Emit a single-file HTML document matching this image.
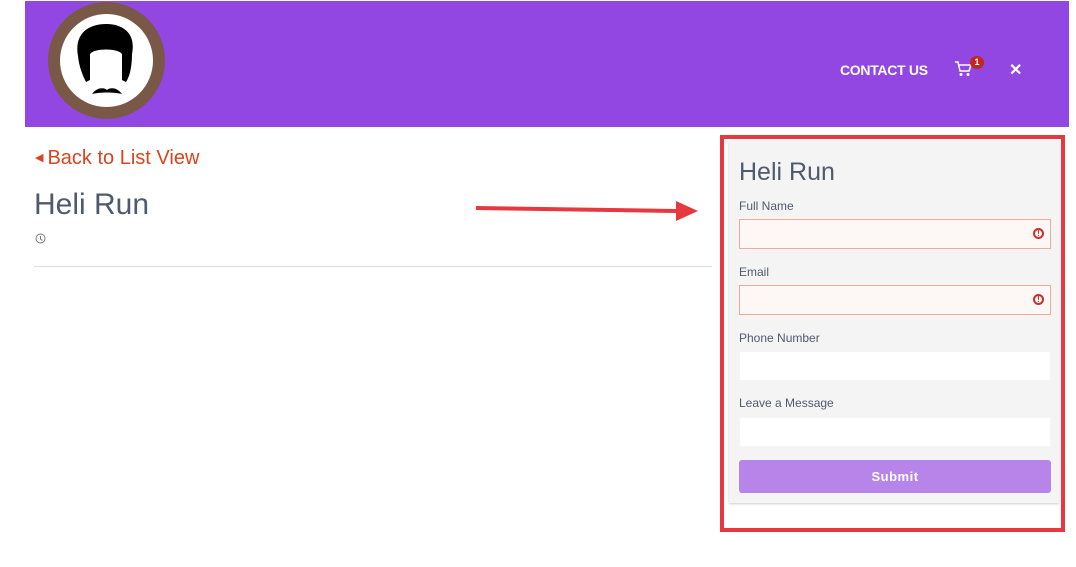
<!DOCTYPE html>
<html><head><meta charset="utf-8"><style>
*{box-sizing:border-box;margin:0;padding:0}
body{width:1076px;height:567px;background:#fff;font-family:"Liberation Sans",sans-serif;position:relative;overflow:hidden}
.hdr{position:absolute;left:25px;top:1px;width:1044px;height:126px;background:#9347e2}
.logo{position:absolute;left:48px;top:2px;width:117px;height:117px;border-radius:50%;background:#7a5847}
.logo .in{position:absolute;left:12px;top:12px;width:93px;height:93px;border-radius:50%;background:#fff}
.nav{position:absolute;top:62px;color:#fff;font-weight:bold;font-size:14px;letter-spacing:-0.3px}
.back{position:absolute;left:35px;top:147px;color:#d9441f;font-size:20px}
.title{position:absolute;left:34px;top:188px;color:#4f5a6e;font-size:30px}
.line{position:absolute;left:34px;top:266px;width:678px;height:1px;background:#dcdce2}
.redbox{position:absolute;left:720px;top:135px;width:345px;height:397px;border:4px solid #e8383f}
.panel{position:absolute;left:729px;top:140px;width:330px;height:363px;background:#f4f4f4;box-shadow:0 1px 2px #ccc}
.lbl{position:absolute;left:739px;color:#4f5a6e;font-size:12px}
.inp{position:absolute;left:739px;width:312px;height:30px;background:#fff;border:1px solid #f5f5f5}
.err{background:#fdf7f6;border:1px solid #f3a898}
.ic{position:absolute;right:6px;top:8px;width:11px;height:11px;border:2px solid #c9302c;border-radius:50%;color:#c9302c;font-size:8px;font-weight:bold;text-align:center;line-height:7px}
.btn{position:absolute;left:739px;top:460px;width:312px;height:33px;background:#b784ea;border-radius:3px;color:#fff;font-weight:bold;font-size:13px;text-align:center;line-height:33px;letter-spacing:.5px}
</style></head><body>
<div class="hdr"></div>
<div class="logo"><div class="in">
<svg width="93" height="93" viewBox="0 0 93 93"><path d="M18 42 C14 20 28 10 46 10 C64 10 76 20 72 40 C72 52 70 62 66 68 L62 66 L62 40 C58 34 34 34 30 40 L30 66 L26 68 C22 60 19 52 18 42 Z" fill="#000"/><path d="M32 80 C38 72 45 74 47 76 C49 74 56 72 62 80 C54 78 40 78 32 80Z" fill="#000"/></svg>
</div></div>
<div class="nav" style="left:840px">CONTACT US</div>
<svg style="position:absolute;left:954px;top:61px" width="18" height="16" viewBox="0 0 18 16"><path d="M1 1h3l2 9h9l2-6H5" fill="none" stroke="#fff" stroke-width="1.5"/><circle cx="7" cy="13.5" r="1.5" fill="#fff"/><circle cx="14" cy="13.5" r="1.5" fill="#fff"/></svg>
<div style="position:absolute;left:970px;top:56px;width:14px;height:13px;border-radius:50%;background:#c0281e;color:#fff;font-size:9px;font-weight:bold;text-align:center;line-height:13px">1</div>
<div class="nav" style="left:1009px;top:60px;font-size:16px">✕</div>
<div class="back"><span style="font-size:11px;position:relative;top:-3px;margin-right:4px">◀</span>Back to List View</div>
<div class="title">Heli Run</div>
<svg style="position:absolute;left:35px;top:233px" width="11" height="11"><circle cx="5.5" cy="5.5" r="4.5" fill="none" stroke="#777" stroke-width="1"/><path d="M5.5 3v3l2 1.5" stroke="#777" fill="none"/></svg>
<div class="line"></div>
<svg style="position:absolute;left:476px;top:199px" width="225" height="26"><path d="M0 9 L200 12" stroke="#e8383f" stroke-width="4"/><path d="M200 2 L222 12 L200 22Z" fill="#e8383f"/></svg>
<div class="redbox"></div>
<div class="panel"></div>
<div style="position:absolute;left:739px;top:158px;color:#4f5a6e;font-size:25px">Heli Run</div>
<div class="lbl" style="top:199px">Full Name</div>
<div class="inp err" style="top:219px"><div class="ic">!</div></div>
<div class="lbl" style="top:265px">Email</div>
<div class="inp err" style="top:285px"><div class="ic">!</div></div>
<div class="lbl" style="top:331px">Phone Number</div>
<div class="inp" style="top:351px"></div>
<div class="lbl" style="top:396px">Leave a Message</div>
<div class="inp" style="top:417px"></div>
<div class="btn">Submit</div>
</body></html>
